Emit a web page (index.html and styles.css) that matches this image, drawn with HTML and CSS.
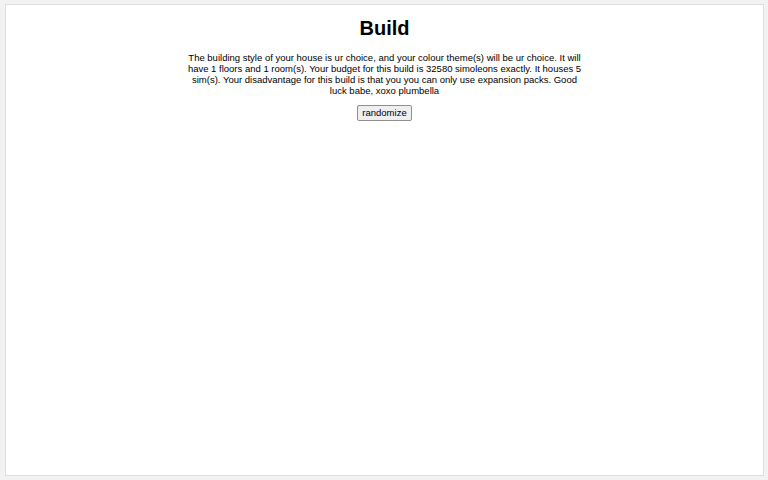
FILE: index.html
```html
<!DOCTYPE html>
<html>
<head>
<meta charset="utf-8">
<title>Build</title>
<link rel="stylesheet" href="styles.css">
</head>
<body>
<main class="panel">
  <h1 class="title">Build</h1>
  <p class="brief">The building style of your house is ur choice, and your colour theme(s) will be ur choice. It will have 1 floors and 1 room(s). Your budget for this build is 32580 simoleons exactly. It houses 5 sim(s). Your disadvantage for this build is that you you can only use expansion packs. Good luck babe, xoxo plumbella</p>
  <button class="randomize" type="button">randomize</button>
</main>
</body>
</html>
```
FILE: styles.css
```css
html, body {
  height: 100%;
}

body {
  margin: 0;
  padding: 4px 4px 4px 5px;
  box-sizing: border-box;
  background: #f2f2f2;
  font-family: "Liberation Sans", Arial, sans-serif;
  color: #000;
}

.panel {
  box-sizing: border-box;
  height: 100%;
  background: #fff;
  border: 1px solid #dedede;
  display: flex;
  flex-direction: column;
  align-items: center;
  padding-top: 11px;
}

.title {
  margin: 0;
  font-size: 20px;
  line-height: 24px;
  font-weight: bold;
}

.brief {
  width: 400px;
  margin: 12px 0 0;
  font-size: 9.5px;
  line-height: 11px;
  text-align: center;
}

.randomize {
  margin-top: 9px;
  font-family: "Liberation Sans", Arial, sans-serif;
  font-size: 9.5px;
  line-height: 12px;
  padding: 1px 4px;
  background: #efefef;
  border: 1px solid #8f8f8f;
  border-radius: 2px;
  color: #000;
}
```
